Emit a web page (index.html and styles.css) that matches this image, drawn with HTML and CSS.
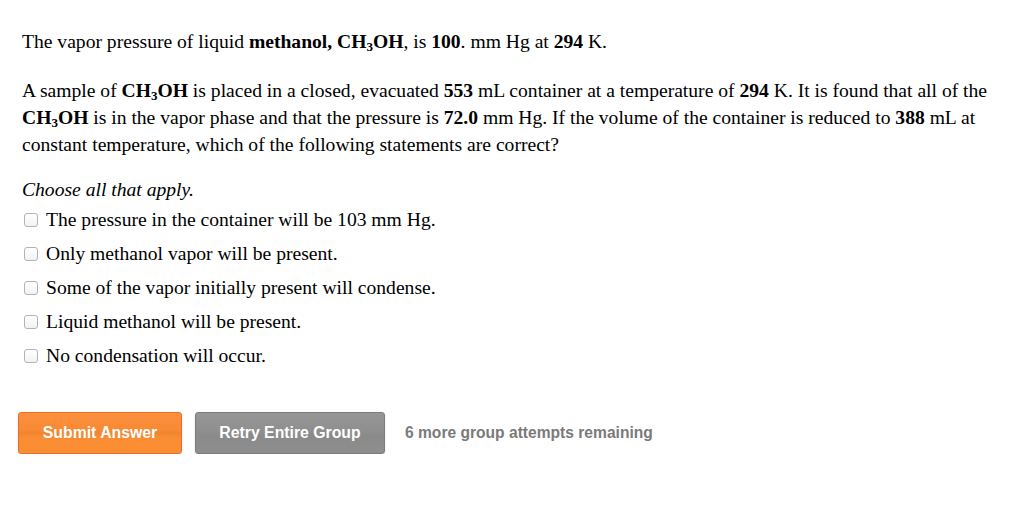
FILE: index.html
```html
<!DOCTYPE html>
<html>
<head>
<meta charset="utf-8">
<link rel="stylesheet" href="styles.css">
</head>
<body>
<div class="page">
  <p class="intro">The vapor pressure of liquid <b>methanol, CH<sub>3</sub>OH</b>, is <b>100</b>. mm Hg at <b>294</b> K.</p>
  <p class="question">A sample of <b>CH<sub>3</sub>OH</b> is placed in a closed, evacuated <b>553</b> mL container at a temperature of <b>294</b> K. It is found that all of the <b>CH<sub>3</sub>OH</b> is in the vapor phase and that the pressure is <b>72.0</b> mm Hg. If the volume of the container is reduced to <b>388</b> mL at constant temperature, which of the following statements are correct?</p>
  <p class="choose">Choose all that apply.</p>
  <ul class="options">
    <li><label><input type="checkbox"><span>The pressure in the container will be 103 mm Hg.</span></label></li>
    <li><label><input type="checkbox"><span>Only methanol vapor will be present.</span></label></li>
    <li><label><input type="checkbox"><span>Some of the vapor initially present will condense.</span></label></li>
    <li><label><input type="checkbox"><span>Liquid methanol will be present.</span></label></li>
    <li><label><input type="checkbox"><span>No condensation will occur.</span></label></li>
  </ul>
  <div class="actions">
    <button class="btn btn-submit">Submit Answer</button>
    <button class="btn btn-retry">Retry Entire Group</button>
    <span class="attempts">6 more group attempts remaining</span>
  </div>
</div>
</body>
</html>
```
FILE: styles.css
```css
html, body {
  margin: 0;
  padding: 0;
  background: #ffffff;
}
.page {
  padding: 28px 0 0 22px;
  font-family: "Liberation Serif", "Times New Roman", serif;
  font-size: 19.6px;
  color: #000;
  width: 978px;
}
p {
  margin: 0;
  line-height: 27px;
}
.intro {
  margin-bottom: 22px;
}
.question {
  margin-bottom: 18px;
}
sub {
  display: inline-block;
  font-size: 13px;
  line-height: 10px;
  vertical-align: -3px;
}
.choose {
  font-style: italic;
}
.options {
  list-style: none;
  margin: 0;
  padding: 0;
}
.options li {
  height: 34px;
  display: flex;
  align-items: center;
}
.options label {
  display: flex;
  align-items: center;
  gap: 8px;
}
.options input {
  appearance: none;
  -webkit-appearance: none;
  margin: 0 0 0 2px;
  width: 14px;
  height: 14px;
  border: 1px solid #b3b3b3;
  border-radius: 3px;
  background: linear-gradient(#ffffff, #f2f2f2);
  box-sizing: border-box;
}
.actions {
  margin-top: 39px;
  margin-left: -4px;
  display: flex;
  align-items: center;
}
.btn {
  height: 42px;
  border-radius: 3px;
  font-family: "Liberation Sans", Arial, sans-serif;
  font-weight: bold;
  font-size: 15.8px;
  color: #ffffff;
  padding: 0;
  box-shadow: 0 1px 2px rgba(0,0,0,0.15);
}
.btn-submit {
  width: 164px;
  border: 1px solid #e5702a;
  background: linear-gradient(#fb9040 0%, #f98a33 40%, #f08530 50%, #fa8c33 60%, #fb8d33 100%);
}
.btn-retry {
  width: 190px;
  margin-left: 13px;
  border: 1px solid #7d7d7d;
  background: linear-gradient(#969696 0%, #8f8f8f 45%, #8a8a8a 55%, #8e8e8e 100%);
}
.attempts {
  margin-left: 20px;
  font-family: "Liberation Sans", Arial, sans-serif;
  font-weight: bold;
  font-size: 15.6px;
  color: #7a7a7a;
}
```
